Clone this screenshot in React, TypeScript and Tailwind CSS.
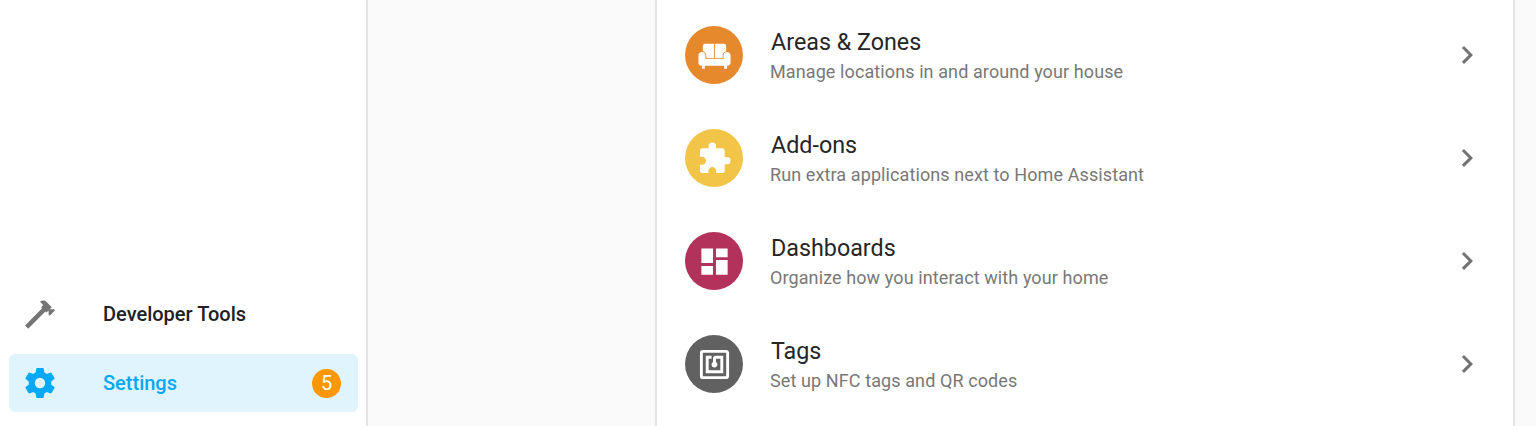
import React from "react";

const paths = {
  hammer:
    "M2 19.63L13.43 8.2L12.72 7.5L14.14 6.07L12 3.89C13.2 2.7 15.09 2.7 16.27 3.89L19.87 7.5L18.45 8.91H21.29L22 9.62L18.45 13.17L17.74 12.46V9.62L16.27 11.04L15.56 10.33L4.13 21.76L2 19.63Z",
  cog: "M12,15.5A3.5,3.5 0 0,1 8.5,12A3.5,3.5 0 0,1 12,8.5A3.5,3.5 0 0,1 15.5,12A3.5,3.5 0 0,1 12,15.5M19.43,12.97C19.47,12.65 19.5,12.33 19.5,12C19.5,11.67 19.47,11.34 19.43,11L21.54,9.37C21.73,9.22 21.78,8.95 21.66,8.73L19.66,5.27C19.54,5.05 19.27,4.96 19.05,5.05L16.56,6.05C16.04,5.66 15.5,5.32 14.87,5.07L14.5,2.42C14.46,2.18 14.25,2 14,2H10C9.75,2 9.54,2.18 9.5,2.42L9.13,5.07C8.5,5.32 7.96,5.66 7.44,6.05L4.95,5.05C4.73,4.96 4.46,5.05 4.34,5.27L2.34,8.73C2.21,8.95 2.27,9.22 2.46,9.37L4.57,11C4.53,11.34 4.5,11.67 4.5,12C4.5,12.33 4.53,12.65 4.57,12.97L2.46,14.63C2.27,14.78 2.21,15.05 2.34,15.27L4.34,18.73C4.46,18.95 4.73,19.03 4.95,18.95L7.44,17.94C7.96,18.34 8.5,18.68 9.13,18.93L9.5,21.58C9.54,21.82 9.75,22 10,22H14C14.25,22 14.46,21.82 14.5,21.58L14.87,18.93C15.5,18.67 16.04,18.34 16.56,17.94L19.05,18.95C19.27,19.03 19.54,18.95 19.66,18.73L21.66,15.27C21.78,15.05 21.73,14.78 21.54,14.63L19.43,12.97Z",
  puzzle:
    "M20.5,11H19V7C19,5.89 18.1,5 17,5H13V3.5A2.5,2.5 0 0,0 10.5,1A2.5,2.5 0 0,0 8,3.5V5H4A2,2 0 0,0 2,7V10.8H3.5C5,10.8 6.2,12 6.2,13.5C6.2,15 5,16.2 3.5,16.2H2V20A2,2 0 0,0 4,22H7.8V20.5C7.8,19 9,17.8 10.5,17.8C12,17.8 13.2,19 13.2,20.5V22H17A2,2 0 0,0 19,20V16H20.5A2.5,2.5 0 0,0 23,13.5A2.5,2.5 0 0,0 20.5,11Z",
  dashboard: "M13,3V9H21V3M13,21H21V11H13M3,21H11V15H3M3,13H11V3H3V13Z",
  nfc: "M18,6H13A2,2 0 0,0 11,8V10.28C10.41,10.62 10,11.26 10,12A2,2 0 0,0 12,14C13.11,14 14,13.1 14,12C14,11.26 13.6,10.62 13,10.28V8H16V16H8V8H10V6H8L6,6V18H18M20,20H4V4H20M20,2H4A2,2 0 0,0 2,4V20A2,2 0 0,0 4,22H20C21.11,22 22,21.1 22,20V4C22,2.89 21.11,2 20,2Z",
  chevron: "M8.59,16.58L13.17,12L8.59,7.41L10,6L16,12L10,18L8.59,16.58Z",
};

const Icon = ({ d, className }: { d: string; className: string }) => (
  <svg viewBox="0 0 24 24" fill="currentColor" className={className}>
    <path d={d} />
  </svg>
);

const SofaIcon = () => (
  <svg viewBox="0 0 24 24" fill="currentColor" className="w-[35px] h-[35px]">
    <path d="M5.5 4H11.7V13.8H6.4V12C6.4 10.4 5.4 9.4 4 9.1V5.5C4 4.7 4.7 4 5.5 4Z" />
    <path d="M18.5 4H12.3V13.8H17.6V12C17.6 10.4 18.6 9.4 20 9.1V5.5C20 4.7 19.3 4 18.5 4Z" />
    <path d="M1 12C1 10.6 2.1 9.6 3.4 9.6C4.8 9.6 5.8 10.6 5.8 12V14.4H18.2V12C18.2 10.6 19.2 9.6 20.6 9.6C21.9 9.6 23 10.6 23 12V17C23 18.1 22.1 19 21 19H20.6V21H18.6V19H5.4V21H3.4V19H3C1.9 19 1 18.1 1 17V12Z" />
  </svg>
);

const rows = [
  {
    title: "Areas & Zones",
    sub: "Manage locations in and around your house",
    color: "bg-[#e6892d]",
    icon: <SofaIcon />,
  },
  {
    title: "Add-ons",
    sub: "Run extra applications next to Home Assistant",
    color: "bg-[#f2c548]",
    icon: <Icon d={paths.puzzle} className="w-[35px] h-[35px]" />,
  },
  {
    title: "Dashboards",
    sub: "Organize how you interact with your home",
    color: "bg-[#b2325c]",
    icon: <Icon d={paths.dashboard} className="w-[35px] h-[35px]" />,
  },
  {
    title: "Tags",
    sub: "Set up NFC tags and QR codes",
    color: "bg-[#616161]",
    icon: <Icon d={paths.nfc} className="w-[35px] h-[35px]" />,
  },
];

export default function App() {
  return (
    <div className="flex h-[426px] w-[1536px] overflow-hidden bg-[#fafafa] font-['Roboto',sans-serif]">
      <aside className="flex w-[368px] shrink-0 flex-col justify-end gap-[11px] border-r-2 border-[#e4e4e4] bg-white pb-[14px] pl-[9px] pr-[8px]">
        <div className="flex h-[58px] items-center pl-[13px]">
          <Icon d={paths.hammer} className="h-[36px] w-[36px] text-[#757575]" />
          <span className="ml-[45px] text-[20px] font-medium text-[#212121]">Developer Tools</span>
        </div>
        <div className="flex h-[58px] items-center rounded-[6px] bg-[#e0f4fd] pl-[13px] pr-[17px]">
          <Icon d={paths.cog} className="h-[36px] w-[36px] text-[#03a9f4]" />
          <span className="ml-[45px] text-[20px] font-medium text-[#03a9f4]">Settings</span>
          <span className="ml-auto flex h-[29px] w-[29px] items-center justify-center rounded-full bg-[#ff9800] text-[20px] text-white">
            5
          </span>
        </div>
      </aside>

      <main className="flex-1 pl-[287px] pr-[21px]">
        <div className="h-full border-x-2 border-[#e4e4e4] bg-white pt-[3.5px]">
          {rows.map((row) => (
            <div key={row.title} className="flex h-[103px] items-center pl-[28px] pr-[28px]">
              <div className={`flex h-[58px] w-[58px] shrink-0 items-center justify-center rounded-full text-white ${row.color}`}>
                {row.icon}
              </div>
              <div className="ml-[27px] flex-1 pt-[2px]">
                <div className="pl-[1px] text-[23.3px] leading-[30px] text-[#262626]">{row.title}</div>
                <div className="mt-[1px] text-[18px] leading-[27px] tracking-[0.1px] text-[#787878]">{row.sub}</div>
              </div>
              <Icon d={paths.chevron} className="h-[36px] w-[36px] text-[#727272]" />
            </div>
          ))}
        </div>
      </main>
    </div>
  );
}
